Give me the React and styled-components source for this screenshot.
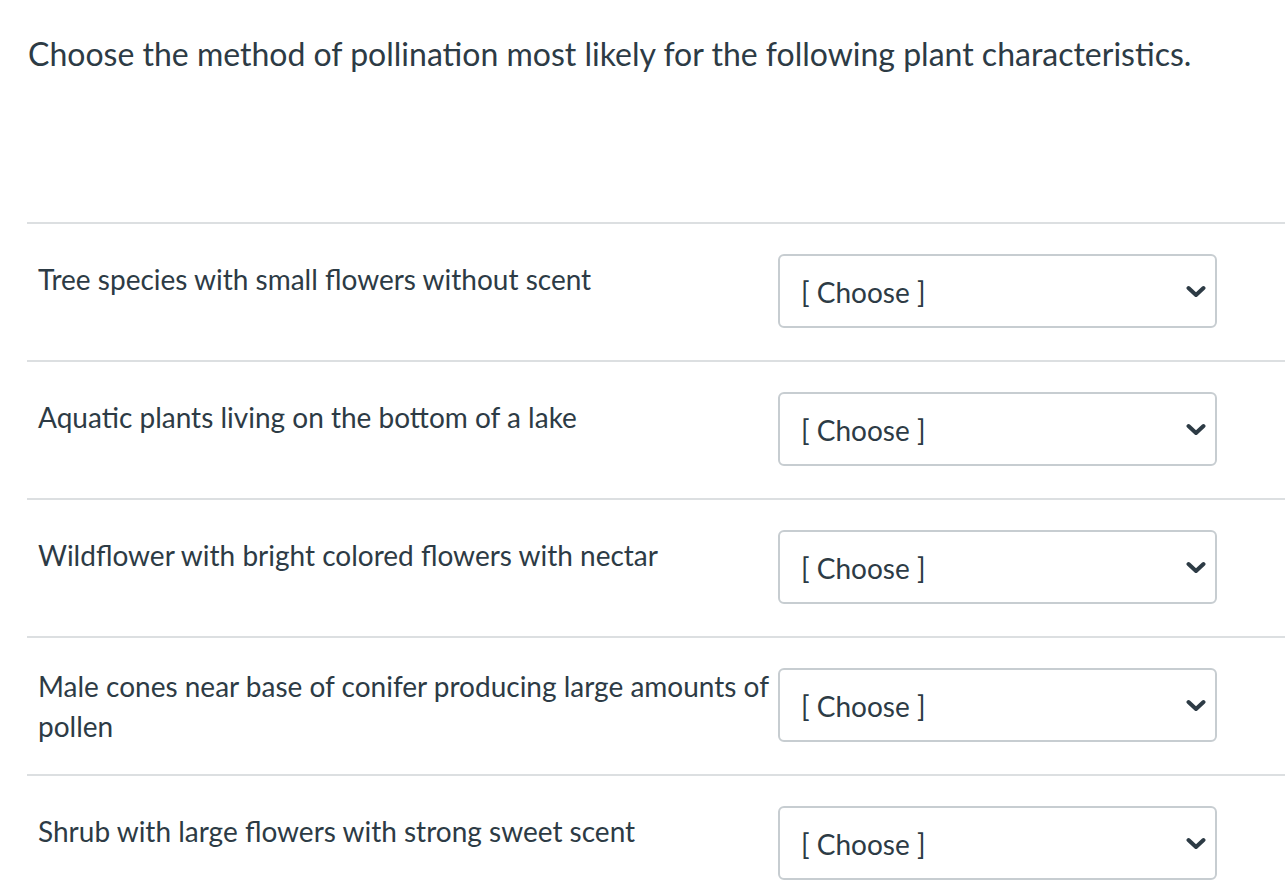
import React from "react";
import styled, { createGlobalStyle } from "styled-components";

const Global = createGlobalStyle`
  body {
    margin: 0;
    background: #ffffff;
    font-family: Lato, "Noto Sans", sans-serif;
    color: #2d3b45;
  }
`;

const Pagina = styled.div`
  padding-left: 27px;
  overflow: hidden;
  height: 880px;
`;

const Titulo = styled.h1`
  margin: 0;
  padding: 31px 0 0 1px;
  font-size: 32px;
  font-weight: 400;
  line-height: 45px;
  height: 222px;
  box-sizing: border-box;
`;

const Linha = styled.div`
  display: flex;
  align-items: flex-start;
  height: 136px;
  border-top: 2px solid #dcdfe1;
  padding-left: 11px;
  margin-right: -20px;
`;

const Rotulo = styled.div`
  width: 734px;
  padding-top: ${(p) => p.$topo}px;
  font-size: 28px;
  line-height: 40px;
`;

const Selecao = styled.div`
  margin-top: 30px;
  margin-left: 6px;
  width: 439px;
  height: 74px;
  box-sizing: border-box;
  border: 2px solid #c7cdd1;
  border-radius: 6px;
  display: flex;
  align-items: center;
  justify-content: space-between;
  padding: 2px 9px 0 21px;
  font-size: 28px;
`;

const Seta = () => (
  <svg width="20" height="14" viewBox="0 0 20 14">
    <polyline
      points="2.5,3 10,10 17.5,3"
      fill="none"
      stroke="#2d3b45"
      strokeWidth="4"
      strokeLinecap="round"
      strokeLinejoin="round"
    />
  </svg>
);

const itens = [
  { texto: "Tree species with small flowers without scent", topo: 35 },
  { texto: "Aquatic plants living on the bottom of a lake", topo: 35 },
  { texto: "Wildflower with bright colored flowers with nectar", topo: 35 },
  {
    texto: "Male cones near base of conifer producing large amounts of pollen",
    topo: 28,
  },
  { texto: "Shrub with large flowers with strong sweet scent", topo: 35 },
];

export default function App() {
  return (
    <Pagina>
      <Global />
      <Titulo>
        Choose the method of pollination most likely for the following plant
        characteristics.
      </Titulo>
      {itens.map((item) => (
        <Linha key={item.texto}>
          <Rotulo $topo={item.topo}>{item.texto}</Rotulo>
          <Selecao>
            <span>[ Choose ]</span>
            <Seta />
          </Selecao>
        </Linha>
      ))}
    </Pagina>
  );
}
